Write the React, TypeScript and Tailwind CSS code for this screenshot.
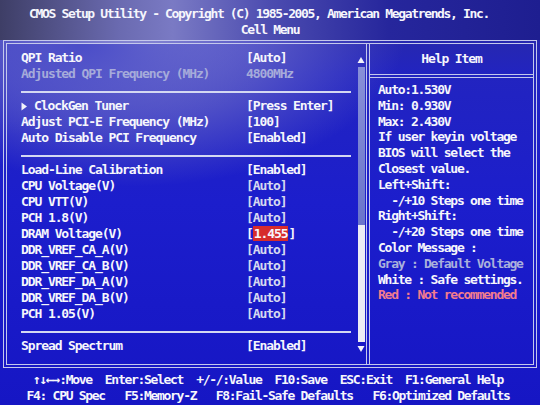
const ROWS: Array<
  | { kind: "row"; label: string; value: string; tone?: "dim" | "auto" | "red"; sub?: boolean }
  | { kind: "sep" }
> = [
  { kind: "row", label: "QPI Ratio", value: "[Auto]" },
  { kind: "row", label: "Adjusted QPI Frequency (MHz)", value: "4800MHz", tone: "dim" },
  { kind: "sep" },
  { kind: "row", label: "ClockGen Tuner", value: "[Press Enter]", sub: true },
  { kind: "row", label: "Adjust PCI-E Frequency (MHz)", value: "[100]" },
  { kind: "row", label: "Auto Disable PCI Frequency", value: "[Enabled]" },
  { kind: "sep" },
  { kind: "row", label: "Load-Line Calibration", value: "[Enabled]" },
  { kind: "row", label: "CPU Voltage(V)", value: "[Auto]", tone: "auto" },
  { kind: "row", label: "CPU VTT(V)", value: "[Auto]", tone: "auto" },
  { kind: "row", label: "PCH 1.8(V)", value: "[Auto]", tone: "auto" },
  { kind: "row", label: "DRAM Voltage(V)", value: "1.455", tone: "red" },
  { kind: "row", label: "DDR_VREF_CA_A(V)", value: "[Auto]", tone: "auto" },
  { kind: "row", label: "DDR_VREF_CA_B(V)", value: "[Auto]", tone: "auto" },
  { kind: "row", label: "DDR_VREF_DA_A(V)", value: "[Auto]", tone: "auto" },
  { kind: "row", label: "DDR_VREF_DA_B(V)", value: "[Auto]", tone: "auto" },
  { kind: "row", label: "PCH 1.05(V)", value: "[Auto]", tone: "auto" },
  { kind: "sep" },
  { kind: "row", label: "Spread Spectrum", value: "[Enabled]" },
];

const HELP: Array<{ text: string; color?: string }> = [
  { text: "Auto:1.530V" },
  { text: "Min: 0.930V" },
  { text: "Max: 2.430V" },
  { text: "If user keyin voltage" },
  { text: "BIOS will select the" },
  { text: "Closest value." },
  { text: "Left+Shift:" },
  { text: "  -/+10 Steps one time" },
  { text: "Right+Shift:" },
  { text: "  -/+20 Steps one time" },
  { text: "Color Message :" },
  { text: "Gray : Default Voltage", color: "text-[#aab0dc]" },
  { text: "White : Safe settings." },
  { text: "Red : Not recommended", color: "text-[#f27d8e]" },
];

function Value({ value, tone }: { value: string; tone?: string }) {
  if (tone === "red") {
    return (
      <span className="text-[#f6f6fc]">
        [<span className="bg-[#d62c2c] px-[1px] leading-[15px]">{value}</span>]
      </span>
    );
  }
  if (tone === "dim") return <span className="text-[#a6abda]">{value}</span>;
  if (tone === "auto") return <span className="text-[#d6d9f0]">{value}</span>;
  return <span className="text-[#f6f6fc]">{value}</span>;
}

function ScrollBar() {
  return (
    <div className="mt-[12px] mr-[1px] flex h-[297px] w-[8px] flex-col items-center">
      <svg width="8" height="8" viewBox="0 0 8 8">
        <path d="M4 1 L7.5 7 L0.5 7 Z" fill="#f2f2fa" />
      </svg>
      <div className="mt-[3px] flex w-[7px] flex-1 flex-col bg-[#6a74cc]">
        <div className="h-[158px] bg-[linear-gradient(180deg,#8890d8,#6a74cc)]" />
        <div className="flex-1 bg-[#ececf4]" />
      </div>
      <svg className="mt-[3px]" width="8" height="8" viewBox="0 0 8 8">
        <path d="M0.5 1 L7.5 1 L4 7 Z" fill="#f2f2fa" />
      </svg>
    </div>
  );
}

export default function App() {
  return (
    <div className="flex h-[405px] w-[540px] flex-col overflow-hidden bg-[radial-gradient(ellipse_50%_38%_at_25%_8%,#8a8ad2_0%,#5a5ac8_45%,transparent_100%),linear-gradient(180deg,#2c2c9a_0%,#2224c0_18%,#1c1ecc_50%,#1616c4_100%)] font-['DejaVu_Sans_Mono',monospace] text-[13px] font-bold tracking-[-1.1px] text-[#f6f6fc]">
      <div className="h-[40px] bg-[linear-gradient(90deg,#3e3e66_0%,#6a6ab0_22%,#7a7ac4_32%,#4c4cb0_50%,#26269c_72%,#1e1e90_100%)] pt-[6px] pr-[22px] text-center leading-[16px] tracking-[-1.35px]">
        <div>CMOS Setup Utility - Copyright (C) 1985-2005, American Megatrends, Inc.</div>
        <div className="pl-[22px]">Cell Menu</div>
      </div>

      <div className="mx-[3px] flex h-[328px] border-[4px] border-double border-[#c4c8ec]">
        <div className="flex w-[359px] bg-[radial-gradient(ellipse_55%_30%_at_20%_0%,#4a4cc8_0%,transparent_100%)]">
          <div className="flex-1 pt-[6px] pl-[14px] pr-[6px] leading-[16px]">
            {ROWS.map((r, i) =>
              r.kind === "sep" ? (
                <div key={i} className="h-[16px] pt-[9px]">
                  <div className="h-[2px] bg-[#d4d8f2]" />
                </div>
              ) : (
                <div key={i} className="grid h-[16px] grid-cols-[225px_1fr] whitespace-pre">
                  <span className={r.tone === "dim" ? "text-[#a6abda]" : ""}>
                    {r.sub ? (
                      <span className="inline-flex items-center">
                        <svg width="7" height="9" viewBox="0 0 7 9" className="mr-[6px]">
                          <path d="M0.5 0.5 L6 4.5 L0.5 8.5 Z" fill="#f2f2fa" />
                        </svg>
                        {r.label}
                      </span>
                    ) : (
                      r.label
                    )}
                  </span>
                  <Value value={r.value} tone={r.tone} />
                </div>
              )
            )}
          </div>
          <ScrollBar />
        </div>

        <div className="flex flex-1 flex-col border-l-[4px] border-double border-[#c4c8ec]">
          <div className="flex h-[34px] items-center justify-center border-b-[4px] border-double border-[#c4c8ec]">
            Help Item
          </div>
          <div className="pt-[4px] pl-[8px] leading-[15.8px] tracking-[-1.25px] whitespace-pre">
            {HELP.map((h, i) => (
              <div key={i} className={h.color ?? ""}>
                {h.text}
              </div>
            ))}
          </div>
        </div>
      </div>

      <div className="pt-[4px] pr-[4px] text-center leading-[16px] tracking-[-1.3px] whitespace-pre">
        <div>{"↑↓←→:Move  Enter:Select  +/-/:Value  F10:Save  ESC:Exit  F1:General Help"}</div>
        <div>{"F4: CPU Spec   F5:Memory-Z   F8:Fail-Safe Defaults   F6:Optimized Defaults"}</div>
      </div>
    </div>
  );
}
